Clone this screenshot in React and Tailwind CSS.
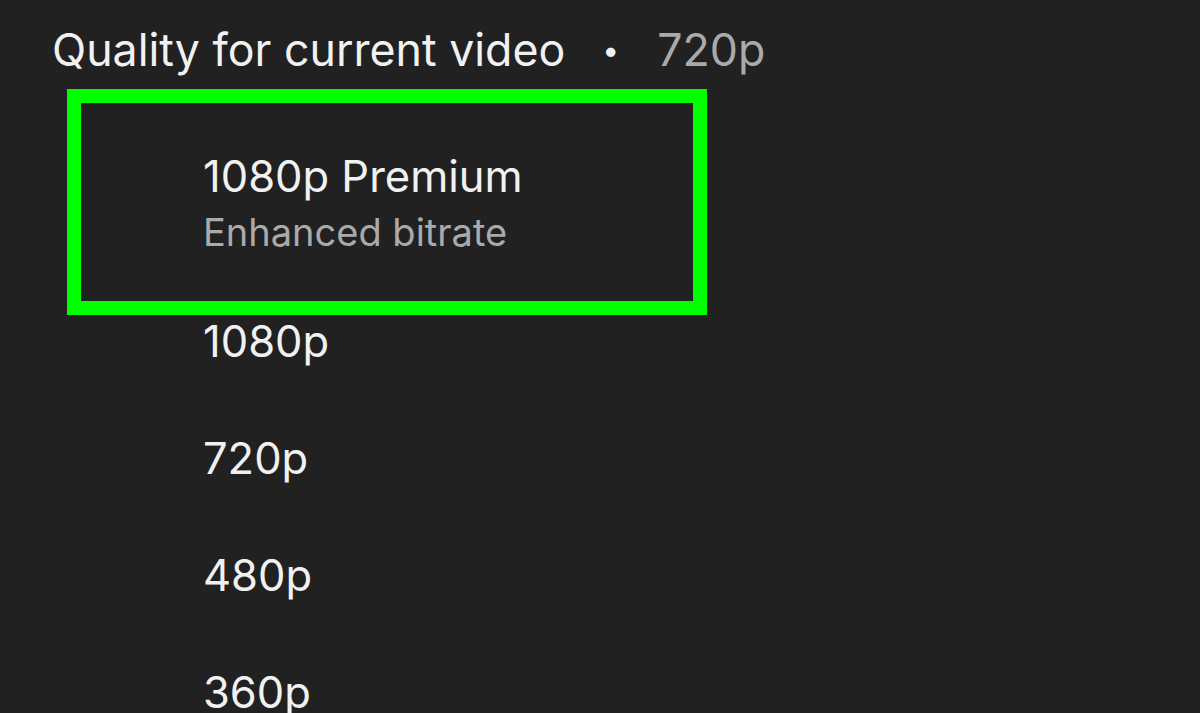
export default function App() {
  const rows = ["1080p", "720p", "480p", "360p"];
  return (
    <div className="w-[1200px] h-[713px] overflow-hidden bg-[#212121] text-[#f1f1f1]" style={{ fontFamily: "Inter, 'Noto Sans', sans-serif" }}>
      <div className="pl-[52px] pt-[20px] flex items-center text-[44.7px] leading-[60px]">
        <span className="text-[#f1f1f1]">Quality for current video</span>
        <span className="ml-[37px] text-[#f1f1f1] text-[30px]">•</span>
        <span className="ml-[38px] text-[#aaaaaa]">720p</span>
      </div>
      <div className="ml-[67px] mt-[9px] w-[640px] h-[226px] border-[14px] border-[#00ff00] pl-[122px] pt-[49px]">
        <div className="text-[43.5px] leading-[48px] text-[#f1f1f1]">1080p Premium</div>
        <div className="mt-[8px] text-[38px] leading-[48px] text-[#aaaaaa]">Enhanced bitrate</div>
      </div>
      <div className="ml-[203px] mt-[2px] flex flex-col gap-[69px]">
        {rows.map((r) => (
          <div key={r} className="text-[43.5px] leading-[48px] text-[#f1f1f1]">{r}</div>
        ))}
      </div>
    </div>
  );
}
